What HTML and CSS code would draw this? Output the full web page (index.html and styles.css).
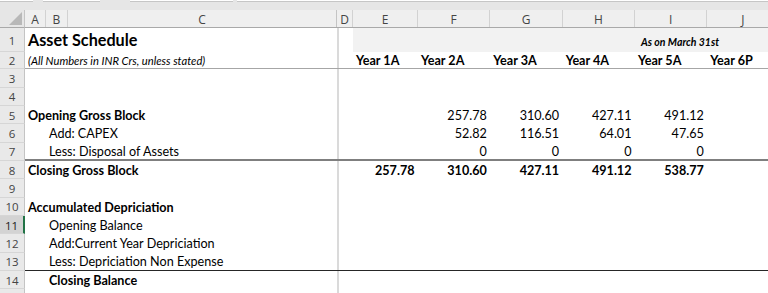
FILE: index.html
```html
<!DOCTYPE html>
<html>
<head>
<meta charset="utf-8">
<link rel="stylesheet" href="styles.css">
</head>
<body>
<div class="topbar">
  <span class="tb tb1"></span><span class="tb tb2"></span><span class="tb tb3"></span><span class="tb tb4"></span>
</div>
<div class="sheet">
  <div class="row hdr">
    <div class="corner"><svg width="13" height="13" viewBox="0 0 13 13"><polygon points="13,0 13,13 0,13" fill="#b8b8b8"/></svg></div>
    <div class="cells">
      <div class="colh">A</div><div class="colh">B</div><div class="colh">C</div><div class="colh">D</div><div class="colh">E</div>
      <div class="colh">F</div><div class="colh">G</div><div class="colh">H</div><div class="colh">I</div><div class="colh">J</div>
    </div>
  </div>

  <div class="row r1">
    <div class="rh">1</div>
    <div class="cells">
      <div class="cell cAC title">Asset Schedule</div>
      <div class="cell cD"></div>
      <div class="cell cEJ fill"></div>
      <div class="cell cI asof">As on March 31st</div>
    </div>
  </div>

  <div class="row r2">
    <div class="rh">2</div>
    <div class="cells line-gray">
      <div class="cell cAC note">(All Numbers in INR Crs, unless stated)</div>
      <div class="cell cD"></div>
      <div class="cell cE b">Year 1A</div>
      <div class="cell cF b">Year 2A</div>
      <div class="cell cG b">Year 3A</div>
      <div class="cell cH b">Year 4A</div>
      <div class="cell cI b">Year 5A</div>
      <div class="cell cJ b">Year 6P</div>
    </div>
  </div>

  <div class="row"><div class="rh">3</div><div class="cells"><div class="cell cD"></div></div></div>
  <div class="row"><div class="rh">4</div><div class="cells"><div class="cell cD"></div></div></div>

  <div class="row">
    <div class="rh">5</div>
    <div class="cells">
      <div class="cell cAC b">Opening Gross Block</div>
      <div class="cell cD"></div>
      <div class="cell cF num">257.78</div>
      <div class="cell cG num">310.60</div>
      <div class="cell cH num">427.11</div>
      <div class="cell cI num">491.12</div>
    </div>
  </div>

  <div class="row">
    <div class="rh">6</div>
    <div class="cells">
      <div class="cell cBC">Add: CAPEX</div>
      <div class="cell cD"></div>
      <div class="cell cF num">52.82</div>
      <div class="cell cG num">116.51</div>
      <div class="cell cH num">64.01</div>
      <div class="cell cI num">47.65</div>
    </div>
  </div>

  <div class="row">
    <div class="rh">7</div>
    <div class="cells line-mid">
      <div class="cell cBC">Less: Disposal of Assets</div>
      <div class="cell cD"></div>
      <div class="cell cF num">0</div>
      <div class="cell cG num">0</div>
      <div class="cell cH num">0</div>
      <div class="cell cI num">0</div>
    </div>
  </div>

  <div class="row">
    <div class="rh">8</div>
    <div class="cells">
      <div class="cell cAC b">Closing Gross Block</div>
      <div class="cell cD"></div>
      <div class="cell cE num b">257.78</div>
      <div class="cell cF num b">310.60</div>
      <div class="cell cG num b">427.11</div>
      <div class="cell cH num b">491.12</div>
      <div class="cell cI num b">538.77</div>
    </div>
  </div>

  <div class="row"><div class="rh">9</div><div class="cells"><div class="cell cD"></div></div></div>

  <div class="row">
    <div class="rh">10</div>
    <div class="cells">
      <div class="cell cAC b">Accumulated Depriciation</div>
      <div class="cell cD"></div>
    </div>
  </div>

  <div class="row">
    <div class="rh sel">11</div>
    <div class="cells">
      <div class="cell cBC">Opening Balance</div>
      <div class="cell cD"></div>
    </div>
  </div>

  <div class="row">
    <div class="rh">12</div>
    <div class="cells">
      <div class="cell cBC">Add:Current Year Depriciation</div>
      <div class="cell cD"></div>
    </div>
  </div>

  <div class="row">
    <div class="rh">13</div>
    <div class="cells line-dark">
      <div class="cell cBC">Less: Depriciation Non Expense</div>
      <div class="cell cD"></div>
    </div>
  </div>

  <div class="row">
    <div class="rh">14</div>
    <div class="cells">
      <div class="cell cBC b">Closing Balance</div>
      <div class="cell cD"></div>
    </div>
  </div>

  <div class="row"><div class="rh"></div><div class="cells"><div class="cell cD"></div></div></div>
</div>
</body>
</html>
```

FILE: styles.css
```css
* { box-sizing: border-box; }
html, body { margin: 0; padding: 0; }
body {
  width: 768px;
  height: 293px;
  overflow: hidden;
  background: #ffffff;
  font-family: "Lato", "Liberation Sans", sans-serif;
  color: #000;
}

.topbar {
  height: 10px;
  background: #e6e6e6;
  display: flex;
  align-items: flex-start;
}
.tb {
  display: block;
  height: 2px;
  background: #ffffff;
  border-bottom: 1px solid #c6c6c6;
}
.tb1 { width: 33px; }
.tb2 { width: 57px; margin-left: 10px; }
.tb3 { width: 103px; margin-left: 30px; }
.tb4 { flex: 1; margin-left: 4px; }

.sheet { display: flex; flex-direction: column; }

.row {
  display: flex;
  height: 18.33px;
  flex: none;
}
.row.hdr { height: 18px; }
.row.r1 { height: 24px; }
.row.r2 { height: 17.33px; }

.rh, .corner {
  width: 25px;
  flex: none;
  background: #e9e9e9;
  border-right: 1px solid #c4c4c4;
  border-bottom: 1px solid #d6d6d6;
  font-family: "Open Sans", "DejaVu Sans", sans-serif;
  font-size: 11.5px;
  color: #444;
  display: flex;
  align-items: center;
  justify-content: center;
  padding-top: 1px;
}
.rh.sel {
  background: #d3d3d3;
  border-right: 2px solid #217346;
  color: #222;
}
.corner {
  background: #e6e6e6;
  align-items: flex-end;
  justify-content: flex-end;
  padding: 0 2px 2px 0;
  border-bottom: 1px solid #a9a9a9;
}

.cells {
  display: grid;
  grid-template-columns: 21px 22px 269px 16px 65px repeat(5, 72.33px);
  grid-template-rows: 100%;
  flex: 1;
  min-width: 0;
  position: relative;
}

.hdr .cells { background: #efefef; border-bottom: 1px solid #a9a9a9; }
.colh {
  font-family: "Open Sans", "DejaVu Sans", sans-serif;
  font-size: 12px;
  color: #444;
  display: flex;
  align-items: center;
  justify-content: center;
  border-right: 1px solid #d2d2d2;
  padding-top: 1px;
}
.colh:nth-child(3) { border-right-color: #c4c4c4; }

.line-gray { border-bottom: 1px solid #a6a6a6; }
.line-mid { border-bottom: 2px solid #7f7f7f; }
.line-dark { border-bottom: 1px solid #262626; }

.cell {
  grid-row: 1;
  font-size: 12.6px;
  display: flex;
  align-items: center;
  padding: 1px 3px 0 3px;
  white-space: nowrap;
  overflow: visible;
  min-width: 0;
}
.cAC { grid-column: 1 / 4; }
.cBC { grid-column: 2 / 4; }
.cD { grid-column: 4; border-left: 2px solid #dadada; }
.cE { grid-column: 5; }
.cF { grid-column: 6; }
.cG { grid-column: 7; }
.cH { grid-column: 8; }
.cI { grid-column: 9; }
.cJ { grid-column: 10; }
.cEJ { grid-column: 5 / 11; }

.b { font-weight: 700; }
.num { justify-content: flex-end; padding-right: 3.5px; }

.fill { background: #f2f2f2; }
.title {
  font-size: 16.2px;
  font-weight: 700;
  align-items: flex-end;
  padding-bottom: 3px;
}
.asof {
  font-size: 10.5px;
  font-weight: 700;
  font-style: italic;
  align-items: flex-end;
  padding: 0 0 4px 6px;
  z-index: 1;
}
.note {
  font-size: 11.2px;
  font-style: italic;
}
```
